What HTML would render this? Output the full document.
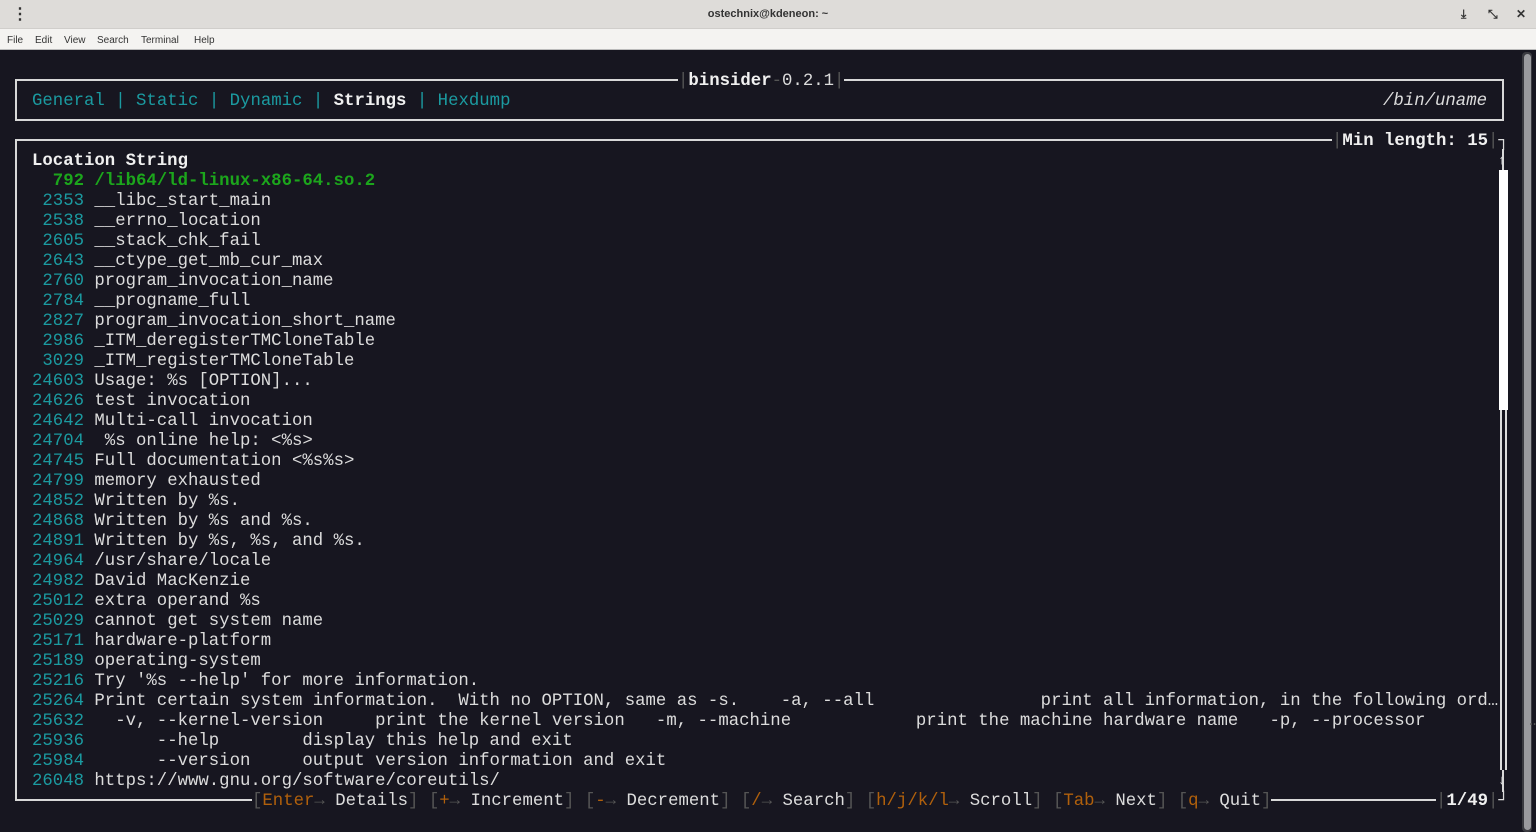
<!DOCTYPE html>
<html><head><meta charset="utf-8"><style>
*{margin:0;padding:0;box-sizing:border-box}
body{width:1536px;height:832px;overflow:hidden;background:#171620;position:relative;font-family:"Liberation Mono",monospace;font-size:17.33px;color:#dcdcdc}
#title{position:absolute;left:0;top:0;width:1536px;height:29px;background:#dedcd9;border-bottom:1px solid #d0cecb;font-family:"Liberation Sans",sans-serif;font-size:11px;color:#333;text-align:center;line-height:29px;font-weight:bold}
#menu{position:absolute;left:0;top:29px;width:1536px;height:21px;background:#f4f3f1;border-bottom:1px solid #bbb;font-family:"Liberation Sans",sans-serif;font-size:10px;color:#333;line-height:21px}
#menu span{position:absolute;top:1px}
.box{position:absolute;border:2px solid #d8d8d8}
pre{font-family:inherit;font-size:inherit;line-height:20px;position:absolute;white-space:pre}
.t{color:#1b9aa0}.b{font-weight:bold;color:#f0f0f0}.n{color:#1b9aa0}.g{color:#1ca61c;font-weight:bold}.o{color:#b0600c}.d{color:#555}
.lab{position:absolute;background:#171620;white-space:pre;line-height:20px}
</style></head><body>
<div id="title">ostechnix@kdeneon: ~
<span style="position:absolute;left:12px;top:0;font-size:16px;color:#333">⋮</span>
<span style="position:absolute;left:1461px;top:0;font-size:12px">⤓</span>
<span style="position:absolute;left:1488px;top:0;font-size:12px">⤡</span>
<span style="position:absolute;left:1516px;top:0;font-size:12px">✕</span>
</div>
<div id="menu"><span style="left:7px">File</span><span style="left:35px">Edit</span><span style="left:64px">View</span><span style="left:97px">Search</span><span style="left:141px">Terminal</span><span style="left:194px">Help</span></div>

<div style="position:absolute;left:1522px;top:52px;width:10px;height:780px;background:#3a3a40;border-radius:4px"></div>
<div style="position:absolute;left:1524px;top:54px;width:7px;height:776px;background:#9a9a9e;border-radius:4px"></div>

<div class="box" style="left:15px;top:79px;width:1489px;height:42px"></div>
<div class="lab" style="left:678px;top:72px"><span class="d">|</span><span class="b">binsider</span><span class="d">-</span>0.2.1<span class="d">|</span></div>
<pre style="left:32px;top:92px"><span class="t">General</span> <span class="t">|</span> <span class="t">Static</span> <span class="t">|</span> <span class="t">Dynamic</span> <span class="t">|</span> <span class="b">Strings</span> <span class="t">|</span> <span class="t">Hexdump</span></pre>
<pre style="left:1383px;top:92px;font-style:italic">/bin/uname</pre>

<div class="box" style="left:15px;top:139px;width:1489px;height:662px"></div>
<div class="lab" style="left:1332px;top:132px;width:180px;height:17px;line-height:20px;overflow:visible"><span class="d">|</span><span class="b">Min length: 15</span><span class="d">|</span>┐</div>

<div style="position:absolute;left:1499px;top:170px;width:9px;height:240px;background:#fff"></div>
<div style="position:absolute;left:1500px;top:410px;width:7px;height:360px;border-left:2px solid #ddd;border-right:2px solid #ddd;background:#171620"></div>
<pre style="left:1498px;top:151px;font-size:13px">↑</pre>
<pre style="left:1498px;top:771px;font-size:13px">↓</pre>

<pre style="left:32px;top:152px"><span class="b">Location String</span>
<span class="g">  792 /lib64/ld-linux-x86-64.so.2</span>
<span class="n"> 2353</span> __libc_start_main
<span class="n"> 2538</span> __errno_location
<span class="n"> 2605</span> __stack_chk_fail
<span class="n"> 2643</span> __ctype_get_mb_cur_max
<span class="n"> 2760</span> program_invocation_name
<span class="n"> 2784</span> __progname_full
<span class="n"> 2827</span> program_invocation_short_name
<span class="n"> 2986</span> _ITM_deregisterTMCloneTable
<span class="n"> 3029</span> _ITM_registerTMCloneTable
<span class="n">24603</span> Usage: %s [OPTION]...
<span class="n">24626</span> test invocation
<span class="n">24642</span> Multi-call invocation
<span class="n">24704</span>  %s online help: &lt;%s&gt;
<span class="n">24745</span> Full documentation &lt;%s%s&gt;
<span class="n">24799</span> memory exhausted
<span class="n">24852</span> Written by %s.
<span class="n">24868</span> Written by %s and %s.
<span class="n">24891</span> Written by %s, %s, and %s.
<span class="n">24964</span> /usr/share/locale
<span class="n">24982</span> David MacKenzie
<span class="n">25012</span> extra operand %s
<span class="n">25029</span> cannot get system name
<span class="n">25171</span> hardware-platform
<span class="n">25189</span> operating-system
<span class="n">25216</span> Try '%s --help' for more information.
<span class="n">25264</span> Print certain system information.  With no OPTION, same as -s.    -a, --all                print all information, in the following ord…
<span class="n">25632</span>   -v, --kernel-version     print the kernel version   -m, --machine            print the machine hardware name   -p, --processor          <span class="d">…</span>
<span class="n">25936</span>       --help        display this help and exit
<span class="n">25984</span>       --version     output version information and exit
<span class="n">26048</span> https://www.gnu.org/software/coreutils/</pre>

<div class="lab" style="left:252px;top:792px;height:16px;overflow:visible"><span class="d">[</span><span class="o">Enter</span><span class="d">→</span> Details<span class="d">]</span> <span class="d">[</span><span class="o">+</span><span class="d">→</span> Increment<span class="d">]</span> <span class="d">[</span><span class="o">-</span><span class="d">→</span> Decrement<span class="d">]</span> <span class="d">[</span><span class="o">/</span><span class="d">→</span> Search<span class="d">]</span> <span class="d">[</span><span class="o">h/j/k/l</span><span class="d">→</span> Scroll<span class="d">]</span> <span class="d">[</span><span class="o">Tab</span><span class="d">→</span> Next<span class="d">]</span> <span class="d">[</span><span class="o">q</span><span class="d">→</span> Quit<span class="d">]</span></div>
<div class="lab" style="left:1436px;top:792px;width:76px;height:16px;overflow:visible"><span class="d">|</span><span class="b">1/49</span><span class="d">|</span>┘</div>
</body></html>
